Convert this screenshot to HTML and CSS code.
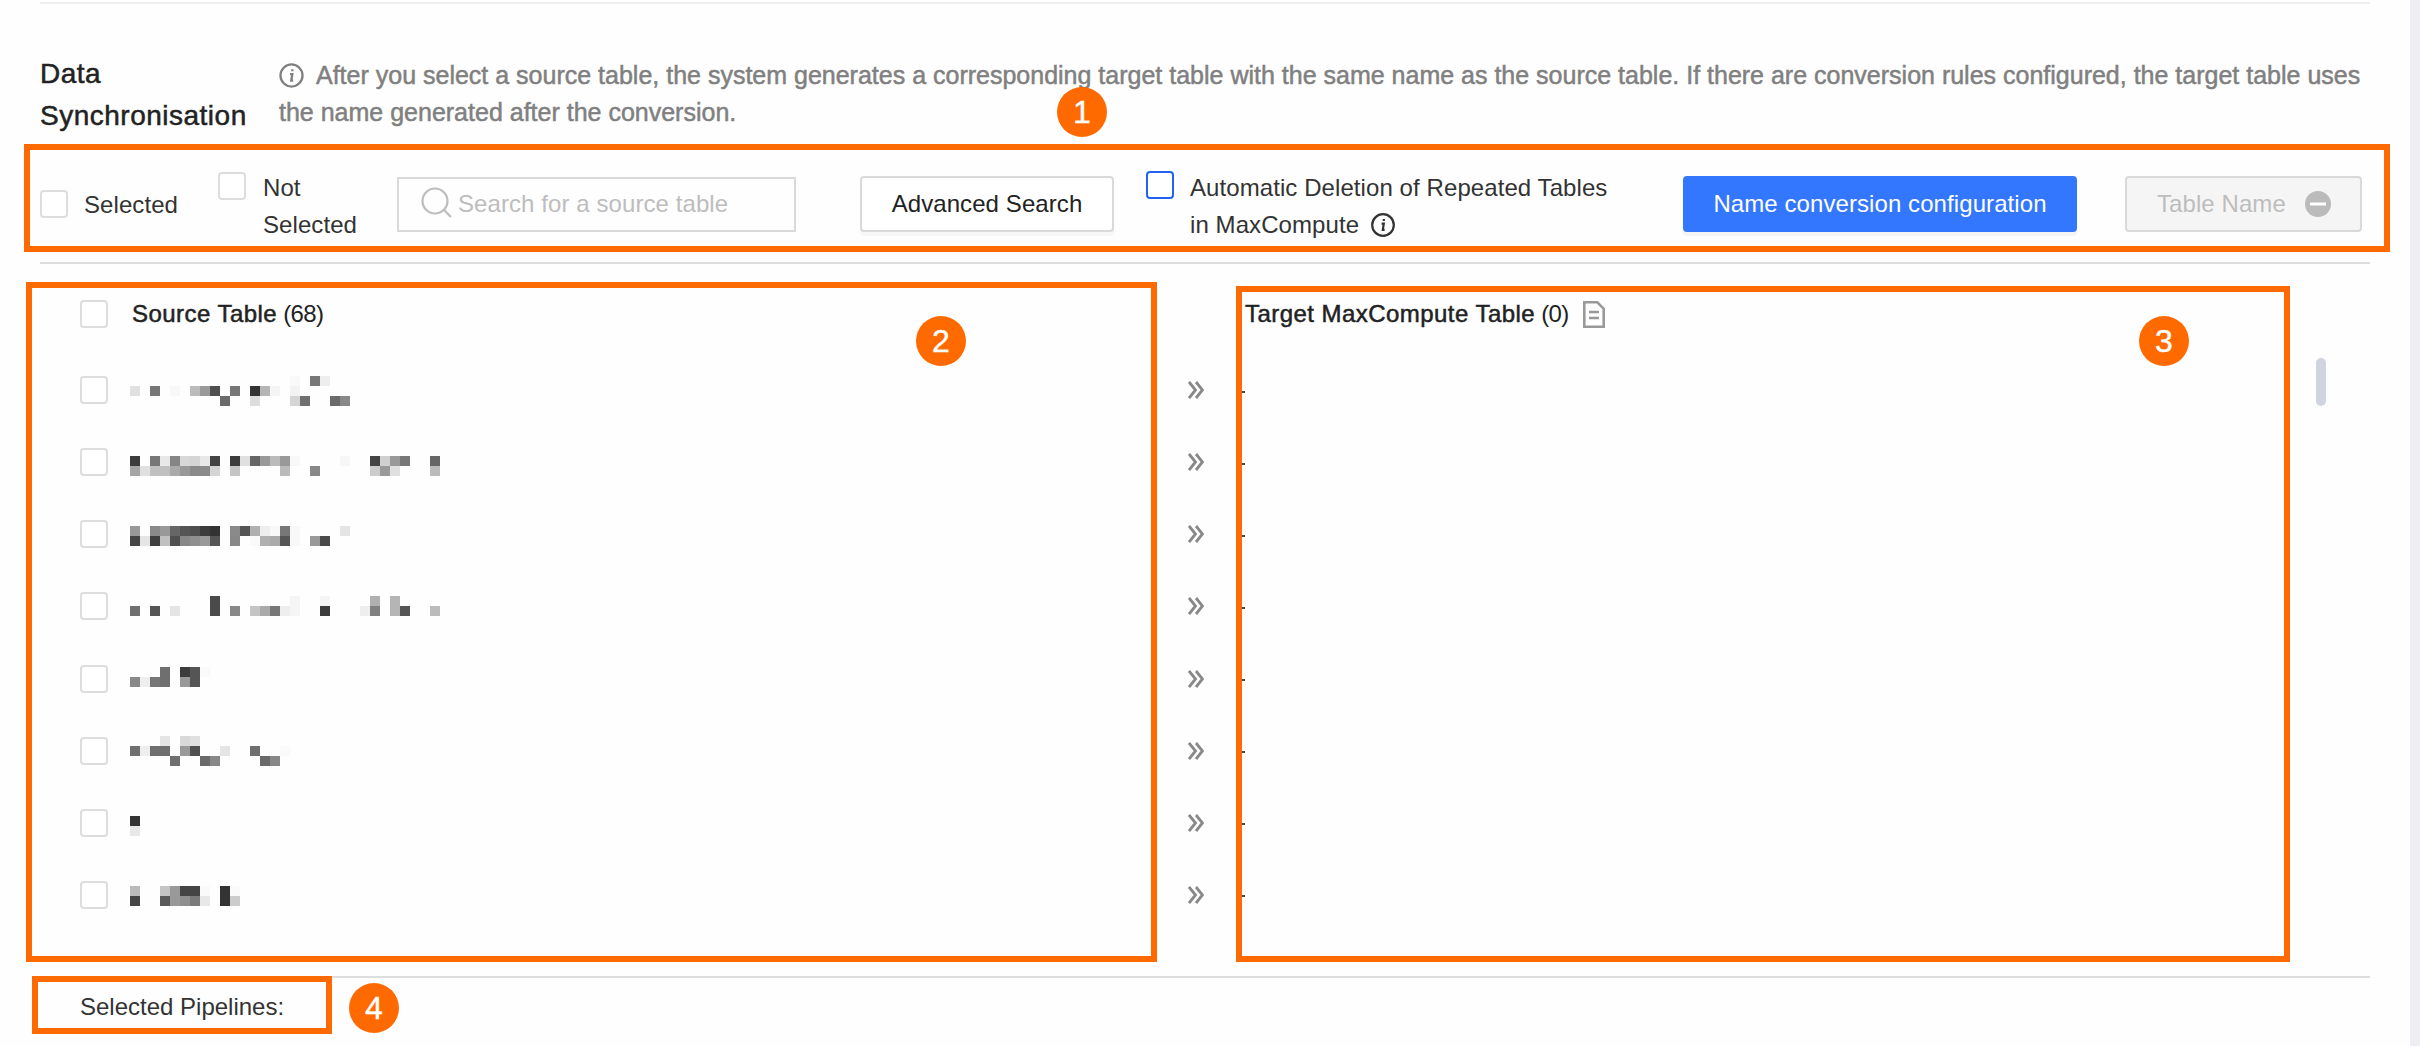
FILE: index.html
```html
<!DOCTYPE html>
<html lang="en">
<head>
  <meta charset="UTF-8">
  <title>Data Synchronisation</title>
  <link rel="stylesheet" href="styles.css">
</head>
<body>

  <div class="page">
    <main class="content">
      <div class="rule rule-top"></div>

      <section class="intro">
        <h2 class="intro-title">Data<br>Synchronisation</h2>
        <p class="hint">
          <svg class="hint-icon" viewBox="0 0 24 24" fill="none" stroke="#808080" stroke-width="2.2"><circle cx="12" cy="12" r="10.6"/><path d="M10.6 10.6h2.2l-1 6.2h1.8M12.8 6v2"/></svg>After you select a source table, the system generates a corresponding target table with the same name as the source table. If there are conversion rules configured, the target table uses<br>the name generated after the conversion.
        </p>
      </section>

      <section class="toolbar">
        <label class="check check-selected"><span class="box"></span><span>Selected</span></label>
        <label class="check check-not"><span class="box"></span><span>Not<br>Selected</span></label>
        <div class="search">
          <svg class="search-icon" viewBox="0 0 34 34" fill="none" stroke="#bdbdbd" stroke-width="2.2"><circle cx="15" cy="14" r="12.5"/><path d="M24 23l7 7"/></svg>
          <span>Search for a source table</span>
        </div>
        <button class="btn btn-advanced">Advanced Search</button>
        <label class="check check-auto">
          <span class="box box-blue"></span>
          <span>Automatic Deletion of Repeated Tables<br>in MaxCompute<svg class="info-icon" viewBox="0 0 24 24" fill="none" stroke="#333" stroke-width="2.2"><circle cx="12" cy="12" r="10.8"/><path d="M10.6 10.6h2.2l-1 6.2h1.8M12.8 6v2"/></svg></span>
        </label>
        <button class="btn btn-primary">Name conversion configuration</button>
        <button class="btn btn-disabled">Table Name<svg class="minus-icon" viewBox="0 0 26 26"><circle cx="13" cy="13" r="13" fill="#bbb"/><path d="M5 13h16" stroke="#fff" stroke-width="3"/></svg></button>
      </section>

      <div class="rule"></div>

      <section class="tables">
        <div class="row row-head">
          <div class="source"><span class="box"></span><span class="head-text"><b>Source Table</b> (68)</span></div>
          <div class="target head-text"><span><b>Target MaxCompute Table</b> (0)</span>
            <svg class="doc-icon" viewBox="0 0 22 27" fill="none" stroke="#999" stroke-width="2.6"><path d="M1.3 1.3h13l6.4 6.4v18H1.3z"/><path d="M6 11h10M6 17h10"/></svg>
          </div>
        </div>

        <div class="rows">
          <div class="row">
            <div class="source"><span class="box"></span>
              <svg class="mosaic" viewBox="0 0 320 32">
                <rect x="160" y="2" fill="#f9f9f9"/><rect x="180" y="2" fill="#777"/><rect x="190" y="2" fill="#eee"/>
                <rect x="0" y="12" fill="#e0e0e0"/><rect x="20" y="12" fill="#777"/><rect x="40" y="12" fill="#f8f8f8"/><rect x="60" y="12" fill="#bbb"/><rect x="70" y="12" fill="#999"/><rect x="80" y="12" fill="#4f4f4f"/><rect x="100" y="12" fill="#777"/><rect x="120" y="12" fill="#333"/><rect x="130" y="12" fill="#b5b5b5"/><rect x="140" y="12" fill="#f5f5f5"/><rect x="160" y="12" fill="#f3f3f3"/>
                <rect x="90" y="22" fill="#6a6a6a"/><rect x="120" y="22" fill="#ddd"/><rect x="160" y="22" fill="#d5d5d5"/><rect x="170" y="22" fill="#6f6f6f"/><rect x="200" y="22" fill="#6a6a6a"/><rect x="210" y="22" fill="#888"/>
              </svg>
            </div>
            <svg class="arrow" viewBox="0 0 16 18" fill="none" stroke="#888" stroke-width="2.8"><path d="M1 1l6.5 8L1 17M8 1l6.5 8L8 17"/></svg>
            <div class="target"><span class="dot"></span></div>
          </div>

          <div class="row">
            <div class="source"><span class="box"></span>
              <svg class="mosaic" viewBox="0 0 320 32">
                <rect x="0" y="10" fill="#3c3c3c"/><rect x="20" y="10" fill="#777"/><rect x="30" y="10" fill="#e8e8e8"/><rect x="40" y="10" fill="#858585"/><rect x="50" y="10" fill="#d8d8d8"/><rect x="60" y="10" fill="#d5d5d5"/><rect x="70" y="10" fill="#e8e8e8"/><rect x="80" y="10" fill="#444"/><rect x="100" y="10" fill="#3c3c3c"/><rect x="110" y="10" fill="#e0e0e0"/><rect x="120" y="10" fill="#666"/><rect x="130" y="10" fill="#999"/><rect x="140" y="10" fill="#bbb"/><rect x="150" y="10" fill="#999"/><rect x="160" y="10" fill="#f8f8f8"/><rect x="210" y="10" fill="#f7f7f7"/><rect x="240" y="10" fill="#444"/><rect x="250" y="10" fill="#d0d0d0"/><rect x="260" y="10" fill="#999"/><rect x="270" y="10" fill="#777"/><rect x="300" y="10" fill="#666"/>
                <rect x="0" y="20" fill="#a5a5a5"/><rect x="10" y="20" fill="#e0e0e0"/><rect x="20" y="20" fill="#c0c0c0"/><rect x="30" y="20" fill="#c0c0c0"/><rect x="40" y="20" fill="#aaa"/><rect x="50" y="20" fill="#999"/><rect x="60" y="20" fill="#8a8a8a"/><rect x="70" y="20" fill="#8a8a8a"/><rect x="80" y="20" fill="#d5d5d5"/><rect x="100" y="20" fill="#c5c5c5"/><rect x="150" y="20" fill="#bbb"/><rect x="180" y="20" fill="#888"/><rect x="240" y="20" fill="#ccc"/><rect x="250" y="20" fill="#999"/><rect x="260" y="20" fill="#e0e0e0"/><rect x="300" y="20" fill="#bbb"/>
              </svg>
            </div>
            <svg class="arrow" viewBox="0 0 16 18" fill="none" stroke="#888" stroke-width="2.8"><path d="M1 1l6.5 8L1 17M8 1l6.5 8L8 17"/></svg>
            <div class="target"><span class="dot"></span></div>
          </div>

          <div class="row">
            <div class="source"><span class="box"></span>
              <svg class="mosaic" viewBox="0 0 320 32">
                <rect x="0" y="8" fill="#999"/><rect x="20" y="8" fill="#8a8a8a"/><rect x="30" y="8" fill="#999"/><rect x="40" y="8" fill="#666"/><rect x="50" y="8" fill="#555"/><rect x="60" y="8" fill="#4f4f4f"/><rect x="70" y="8" fill="#3c3c3c"/><rect x="80" y="8" fill="#333"/><rect x="100" y="8" fill="#8a8a8a"/><rect x="110" y="8" fill="#555"/><rect x="120" y="8" fill="#b0b0b0"/><rect x="130" y="8" fill="#eee"/><rect x="140" y="8" fill="#f8f8f8"/><rect x="150" y="8" fill="#777"/><rect x="160" y="8" fill="#f8f8f8"/><rect x="210" y="8" fill="#e5e5e5"/>
                <rect x="0" y="18" fill="#444"/><rect x="10" y="18" fill="#e5e5e5"/><rect x="20" y="18" fill="#3f3f3f"/><rect x="30" y="18" fill="#c0c0c0"/><rect x="40" y="18" fill="#505050"/><rect x="50" y="18" fill="#888"/><rect x="60" y="18" fill="#8f8f8f"/><rect x="70" y="18" fill="#999"/><rect x="80" y="18" fill="#555"/><rect x="100" y="18" fill="#888"/><rect x="120" y="18" fill="#fafafa"/><rect x="130" y="18" fill="#b0b0b0"/><rect x="140" y="18" fill="#aaa"/><rect x="150" y="18" fill="#555"/><rect x="160" y="18" fill="#f8f8f8"/><rect x="180" y="18" fill="#999"/><rect x="190" y="18" fill="#4a4a4a"/>
              </svg>
            </div>
            <svg class="arrow" viewBox="0 0 16 18" fill="none" stroke="#888" stroke-width="2.8"><path d="M1 1l6.5 8L1 17M8 1l6.5 8L8 17"/></svg>
            <div class="target"><span class="dot"></span></div>
          </div>

          <div class="row">
            <div class="source"><span class="box"></span>
              <svg class="mosaic" viewBox="0 0 320 32">
                <rect x="80" y="6" fill="#4a4a4a"/><rect x="160" y="6" fill="#f5f5f5"/><rect x="190" y="6" fill="#f5f5f5"/><rect x="240" y="6" fill="#b0b0b0"/><rect x="260" y="6" fill="#b5b5b5"/>
                <rect x="0" y="16" fill="#6f6f6f"/><rect x="20" y="16" fill="#555"/><rect x="40" y="16" fill="#e5e5e5"/><rect x="80" y="16" fill="#4a4a4a"/><rect x="100" y="16" fill="#888"/><rect x="120" y="16" fill="#c5c5c5"/><rect x="130" y="16" fill="#aaa"/><rect x="140" y="16" fill="#777"/><rect x="150" y="16" fill="#eee"/><rect x="160" y="16" fill="#f5f5f5"/><rect x="190" y="16" fill="#3c3c3c"/><rect x="230" y="16" fill="#eee"/><rect x="240" y="16" fill="#808080"/><rect x="260" y="16" fill="#b5b5b5"/><rect x="270" y="16" fill="#555"/><rect x="300" y="16" fill="#bbb"/>
              </svg>
            </div>
            <svg class="arrow" viewBox="0 0 16 18" fill="none" stroke="#888" stroke-width="2.8"><path d="M1 1l6.5 8L1 17M8 1l6.5 8L8 17"/></svg>
            <div class="target"><span class="dot"></span></div>
          </div>

          <div class="row">
            <div class="source"><span class="box"></span>
              <svg class="mosaic" viewBox="0 0 320 32">
                <rect x="30" y="4" fill="#6f6f6f"/><rect x="50" y="4" fill="#3c3c3c"/><rect x="60" y="4" fill="#555"/><rect x="70" y="4" fill="#fafafa"/>
                <rect x="0" y="14" fill="#888"/><rect x="10" y="14" fill="#eee"/><rect x="20" y="14" fill="#777"/><rect x="30" y="14" fill="#6f6f6f"/><rect x="50" y="14" fill="#999"/><rect x="60" y="14" fill="#555"/>
              </svg>
            </div>
            <svg class="arrow" viewBox="0 0 16 18" fill="none" stroke="#888" stroke-width="2.8"><path d="M1 1l6.5 8L1 17M8 1l6.5 8L8 17"/></svg>
            <div class="target"><span class="dot"></span></div>
          </div>

          <div class="row">
            <div class="source"><span class="box"></span>
              <svg class="mosaic" viewBox="0 0 320 32">
                <rect x="30" y="1" fill="#e5e5e5"/><rect x="50" y="1" fill="#d8d8d8"/><rect x="60" y="1" fill="#e0e0e0"/>
                <rect x="0" y="11" fill="#6f6f6f"/><rect x="10" y="11" fill="#eee"/><rect x="20" y="11" fill="#6f6f6f"/><rect x="30" y="11" fill="#6f6f6f"/><rect x="50" y="11" fill="#999"/><rect x="60" y="11" fill="#505050"/><rect x="90" y="11" fill="#e5e5e5"/><rect x="120" y="11" fill="#6f6f6f"/><rect x="150" y="11" fill="#fafafa"/>
                <rect x="40" y="21" fill="#6f6f6f"/><rect x="70" y="21" fill="#6a6a6a"/><rect x="80" y="21" fill="#888"/><rect x="130" y="21" fill="#6a6a6a"/><rect x="140" y="21" fill="#888"/>
              </svg>
            </div>
            <svg class="arrow" viewBox="0 0 16 18" fill="none" stroke="#888" stroke-width="2.8"><path d="M1 1l6.5 8L1 17M8 1l6.5 8L8 17"/></svg>
            <div class="target"><span class="dot"></span></div>
          </div>

          <div class="row">
            <div class="source"><span class="box"></span>
              <svg class="mosaic" viewBox="0 0 320 32">
                <rect x="0" y="9" fill="#333"/>
                <rect x="0" y="19" fill="#e8e8e8"/>
              </svg>
            </div>
            <svg class="arrow" viewBox="0 0 16 18" fill="none" stroke="#888" stroke-width="2.8"><path d="M1 1l6.5 8L1 17M8 1l6.5 8L8 17"/></svg>
            <div class="target"><span class="dot"></span></div>
          </div>

          <div class="row">
            <div class="source"><span class="box"></span>
              <svg class="mosaic" viewBox="0 0 320 32">
                <rect x="0" y="7" fill="#bbb"/><rect x="30" y="7" fill="#c5c5c5"/><rect x="40" y="7" fill="#999"/><rect x="50" y="7" fill="#444"/><rect x="60" y="7" fill="#444"/><rect x="70" y="7" fill="#fafafa"/><rect x="90" y="7" fill="#333"/><rect x="100" y="7" fill="#fafafa"/>
                <rect x="0" y="17" fill="#444"/><rect x="30" y="17" fill="#5a5a5a"/><rect x="40" y="17" fill="#999"/><rect x="50" y="17" fill="#8f8f8f"/><rect x="60" y="17" fill="#7a7a7a"/><rect x="70" y="17" fill="#e8e8e8"/><rect x="90" y="17" fill="#333"/><rect x="100" y="17" fill="#ccc"/>
              </svg>
            </div>
            <svg class="arrow" viewBox="0 0 16 18" fill="none" stroke="#888" stroke-width="2.8"><path d="M1 1l6.5 8L1 17M8 1l6.5 8L8 17"/></svg>
            <div class="target"><span class="dot"></span></div>
          </div>

          <div class="scroll-thumb"></div>
        </div>
      </section>

      <div class="rule rule-bottom"></div>
      <div class="pipelines">Selected Pipelines:</div>
    </main>

    <aside class="side-strip"></aside>

    <!-- callouts drawn over the page -->
    <div class="mark mark-1"></div>
    <div class="mark mark-2"></div>
    <div class="mark mark-3"></div>
    <div class="mark mark-4"></div>
    <div class="badge badge-1">1</div>
    <div class="badge badge-2">2</div>
    <div class="badge badge-3">3</div>
    <div class="badge badge-4">4</div>
  </div>

</body>
</html>
```

FILE: styles.css
```css
html, body {
  margin: 0;
  height: 100%;
  background: #fefefe;
}

*, *:before, *:after {
  box-sizing: border-box;
}

body {
  font-family: "Liberation Sans", Arial, sans-serif;
  font-size: 24px;
  color: #333;
}

.page {
  position: relative;
  display: flex;
  height: 1046px;
  overflow: hidden;
}

.content {
  flex: 1;
  padding: 2px 40px 0;
}

.side-strip {
  width: 10px;
  background: #eeeef3;
}

.rule {
  height: 2px;
  background: #ddd;
}

.rule-top {
  background: #eee;
}

.rule-bottom {
  margin-top: 45px;
}

/* intro */
.intro {
  display: flex;
  height: 167px;
  padding-top: 49px;
}

.intro-title {
  flex: none;
  width: 239px;
  margin: 0;
  font-size: 28px;
  font-weight: 400;
  line-height: 42px;
  letter-spacing: .5px;
  color: #222;
  -webkit-text-stroke: .5px #222;
}

.hint {
  flex: 1;
  margin: 4px 0 0;
  color: #808080;
  font-size: 25px;
  line-height: 37px;
  white-space: nowrap;
  -webkit-text-stroke: .5px #808080;
}

.hint-icon {
  width: 25px;
  height: 25px;
  margin-right: 12px;
  vertical-align: -4px;
}

/* toolbar */
.toolbar {
  display: flex;
  align-items: center;
  height: 91px;
  padding-bottom: 25px;
  letter-spacing: .08px;
}

.check {
  display: flex;
  line-height: 37px;
}

.box {
  flex: none;
  width: 28px;
  height: 28px;
  border: 2px solid #ddd;
  border-radius: 4px;
  background: #fff;
}

.box-blue {
  border-color: #1f63f0;
}

.check-selected {
  align-items: center;
  gap: 16px;
  width: 178px;
}

.check-not {
  gap: 17px;
  width: 179px;
  margin-top: 3px;
}

.check-not .box {
  margin-top: 3.5px;
}

.check-auto {
  gap: 16px;
  width: 537px;
  margin: 3px 0 0 32px;
}

.check-auto .box {
  margin-top: 2.5px;
}

.search {
  display: flex;
  align-items: center;
  gap: 4px;
  width: 399px;
  height: 55px;
  padding-left: 21px;
  border: 2px solid #d9d9d9;
  color: #bdbdbd;
}

.search-icon {
  width: 34px;
  height: 34px;
}

.btn {
  height: 56px;
  padding: 0;
  border: 2px solid #d9d9d9;
  border-radius: 4px;
  background: #fff;
  font: inherit;
  letter-spacing: inherit;
  color: #222;
}

.btn-advanced {
  width: 254px;
  margin-left: 64px;
  box-shadow: 0 4px 0 #f7f7f7;
}

.btn-primary {
  width: 394px;
  border: none;
  background: #3377ff;
  color: #fff;
  box-shadow: 0 4px 0 #f5f5f5;
}

.btn-disabled {
  display: flex;
  align-items: center;
  width: 237px;
  margin-left: 48px;
  padding-left: 30px;
  background: #f5f5f5;
  color: #bdbdbd;
}

.minus-icon {
  width: 26px;
  height: 26px;
  margin-left: 19px;
}

.info-icon {
  width: 24px;
  height: 24px;
  margin-left: 12px;
  vertical-align: -4px;
}

/* tables */
.row {
  display: grid;
  grid-template-columns: 1148px 16px 41px 1fr;
  align-items: center;
  height: 72.14px;
}

.row-head {
  height: 90px;
  padding-top: 10px;
}

.rows {
  position: relative;
}

.source {
  display: flex;
  align-items: center;
  gap: 22px;
  padding-left: 40px;
}

.row-head .source {
  gap: 24px;
}

.row-head .target {
  display: flex;
  align-items: center;
  gap: 14px;
}

.head-text {
  font-size: 24px;
  letter-spacing: -.6px;
  color: #222;
}

.head-text b {
  font-weight: 400;
  letter-spacing: .45px;
  -webkit-text-stroke: .5px #222;
}

.mosaic {
  width: 320px;
  height: 32px;
}

.mosaic rect {
  width: 10px;
  height: 10px;
}

.arrow {
  width: 16px;
  height: 18px;
}

.target {
  grid-column: 4;
}

.dot {
  display: block;
  width: 3px;
  height: 2px;
  margin: 3px 0 0 -3px;
  background: #444;
}

.doc-icon {
  width: 22px;
  height: 27px;
}

.scroll-thumb {
  position: absolute;
  top: 4px;
  right: 44px;
  width: 10px;
  height: 48px;
  border-radius: 5px;
  background: #d0d3e0;
}

.pipelines {
  padding-left: 40px;
  line-height: 58px;
  color: #333;
}

/* callouts */
.mark {
  position: absolute;
  border: 6px solid #ff6a00;
}

.mark-1 { left: 24px; top: 144px; width: 2366px; height: 108px; }
.mark-2 { left: 26px; top: 282px; width: 1131px; height: 680px; }
.mark-3 { left: 1236px; top: 286px; width: 1054px; height: 676px; }
.mark-4 { left: 32px; top: 976px; width: 300px; height: 58px; }

.badge {
  position: absolute;
  width: 50px;
  height: 50px;
  border-radius: 50%;
  background: #ff6a00;
  color: #fff;
  font-size: 32px;
  line-height: 50px;
  text-align: center;
  -webkit-text-stroke: .4px #fff;
}

.badge-1 { left: 1057px; top: 87px; }
.badge-2 { left: 916px; top: 316px; }
.badge-3 { left: 2139px; top: 316px; }
.badge-4 { left: 349px; top: 983px; }
```
